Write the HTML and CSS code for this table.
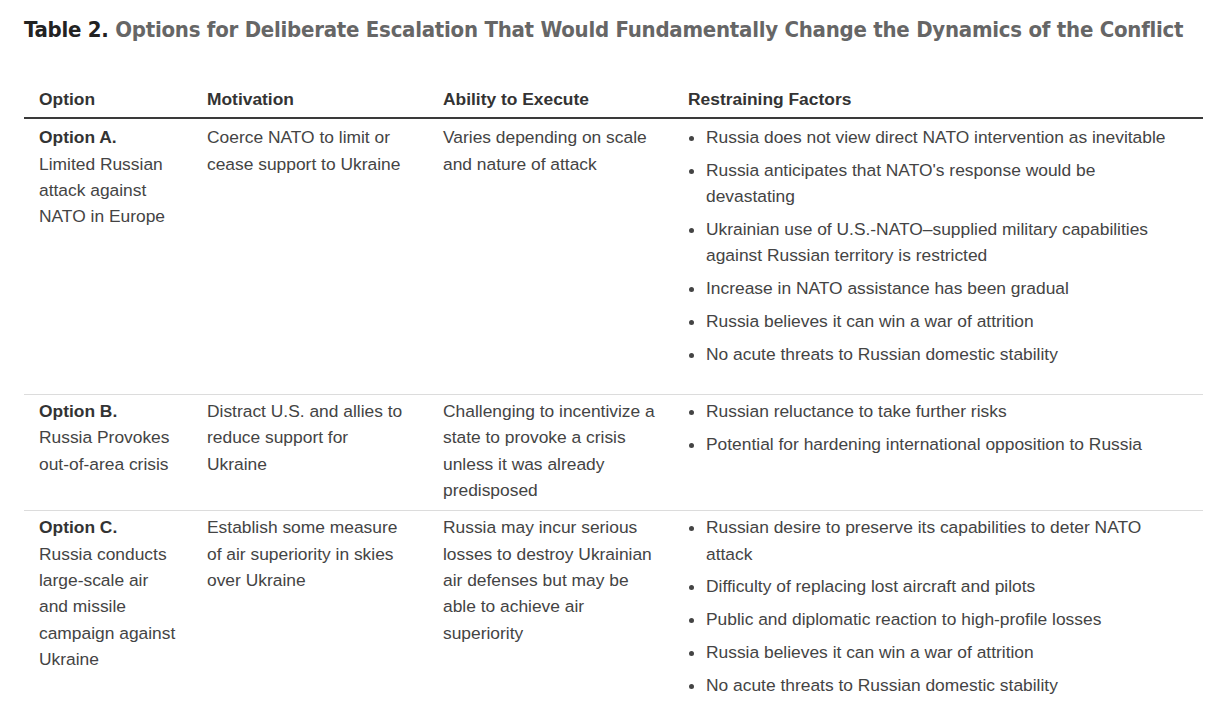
FILE: index.html
```html
<!DOCTYPE html>
<html>
<head>
<meta charset="utf-8">
<link rel="stylesheet" href="styles.css">
</head>
<body>
<div class="page">
  <h1 class="title"><span class="num">Table 2.</span> Options for Deliberate Escalation That Would Fundamentally Change the Dynamics of the Conflict</h1>
  <table class="tbl">
    <colgroup>
      <col class="c1"><col class="c2"><col class="c3"><col class="c4">
    </colgroup>
    <thead>
      <tr>
        <th class="p1">Option</th>
        <th class="p2">Motivation</th>
        <th class="p3">Ability to Execute</th>
        <th class="p4">Restraining Factors</th>
      </tr>
    </thead>
    <tbody>
      <tr>
        <td class="p1"><strong>Option A.</strong><br>Limited Russian attack against NATO in Europe</td>
        <td class="p2">Coerce NATO to limit or cease support to Ukraine</td>
        <td class="p3">Varies depending on scale and nature of attack</td>
        <td class="p4">
          <ul>
            <li>Russia does not view direct NATO intervention as inevitable</li>
            <li>Russia anticipates that NATO's response would be devastating</li>
            <li>Ukrainian use of U.S.-NATO–supplied military capabilities against Russian territory is restricted</li>
            <li>Increase in NATO assistance has been gradual</li>
            <li>Russia believes it can win a war of attrition</li>
            <li>No acute threats to Russian domestic stability</li>
          </ul>
        </td>
      </tr>
      <tr>
        <td class="p1"><strong>Option B.</strong><br>Russia Provokes out-of-area crisis</td>
        <td class="p2">Distract U.S. and allies to reduce support for Ukraine</td>
        <td class="p3">Challenging to incentivize a state to provoke a crisis unless it was already predisposed</td>
        <td class="p4">
          <ul>
            <li>Russian reluctance to take further risks</li>
            <li>Potential for hardening international opposition to Russia</li>
          </ul>
        </td>
      </tr>
      <tr>
        <td class="p1"><strong>Option C.</strong><br>Russia conducts large-scale air and missile campaign against Ukraine</td>
        <td class="p2">Establish some measure of air superiority in skies over Ukraine</td>
        <td class="p3">Russia may incur serious losses to destroy Ukrainian air defenses but may be able to achieve air superiority</td>
        <td class="p4">
          <ul>
            <li>Russian desire to preserve its capabilities to deter NATO attack</li>
            <li>Difficulty of replacing lost aircraft and pilots</li>
            <li>Public and diplomatic reaction to high-profile losses</li>
            <li>Russia believes it can win a war of attrition</li>
            <li>No acute threats to Russian domestic stability</li>
          </ul>
        </td>
      </tr>
    </tbody>
  </table>
</div>
</body>
</html>
```

FILE: styles.css
```css
html, body {
  margin: 0;
  padding: 0;
  background: #ffffff;
}

.page {
  padding: 15px 17px 0 24px;
  font-family: "Liberation Sans", Arial, sans-serif;
  color: #444444;
}

.title {
  margin: 0;
  font-family: "DejaVu Sans Condensed", "DejaVu Sans", sans-serif;
  font-stretch: condensed;
  font-weight: bold;
  font-size: 22px;
  letter-spacing: -0.25px;
  line-height: 30px;
  color: #666666;
  white-space: nowrap;
}

.title .num {
  color: #222222;
}

.tbl {
  margin-top: 41px;
  width: 1179px;
  border-collapse: collapse;
  table-layout: fixed;
  font-size: 17.4px;
  line-height: 26.3px;
}

.c1 { width: 168px; }
.c2 { width: 236px; }
.c3 { width: 245px; }
.c4 { width: 530px; }

.tbl th {
  text-align: left;
  font-weight: bold;
  color: #333333;
  padding: 0 0 5px 15px;
  border-bottom: 2px solid #3a3a3a;
  vertical-align: bottom;
}

.tbl td {
  vertical-align: top;
  padding: 5px 0 7px 15px;
  border-bottom: 1px solid #dcdcdc;
}

.tbl tbody tr + tr td {
  padding-top: 3px;
}

.tbl tbody tr:last-child td {
  border-bottom: none;
}

.tbl td strong {
  color: #333333;
}

.tbl th.p1, .tbl td.p1 { padding-right: 15px; }
.tbl td.p2 { padding-right: 21px; }
.tbl td.p3 { padding-right: 12px; }
.tbl td.p4 { padding-right: 15px; }

.tbl ul {
  margin: 0 0 20px 0;
  padding: 0 0 0 18px;
}

.tbl li {
  margin: 0 0 6.5px 0;
}
```
